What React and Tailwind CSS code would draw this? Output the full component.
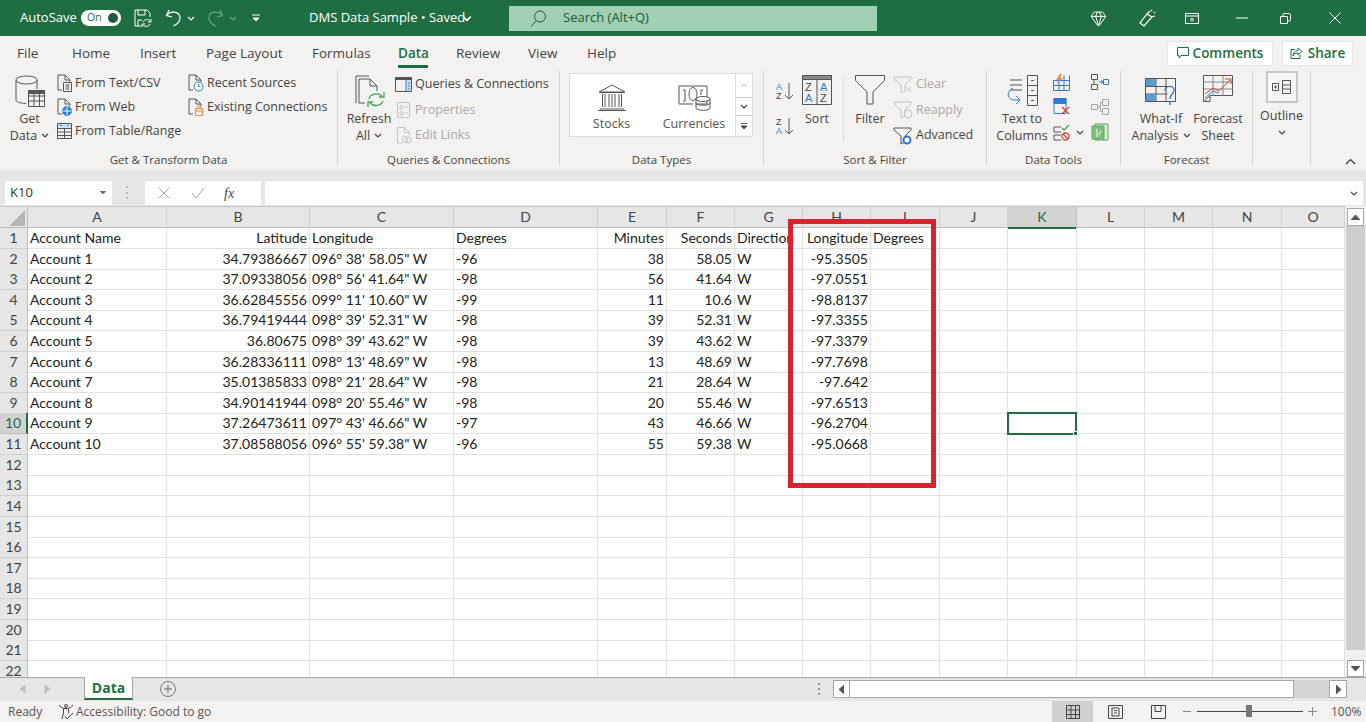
import { Gem } from "lucide-react";

const headers = ["A", "B", "C", "D", "E", "F", "G", "H", "I", "J", "K", "L", "M", "N", "O"];
const colw = "grid grid-cols-[28px_139px_143px_144px_144px_69px_68px_68px_68px_69px_68px_69px_68px_68px_69px_63px]";

const rows = [
  ["Account 1", "34.79386667", "096° 38' 58.05\" W", "-96", "38", "58.05", "W", "-95.3505"],
  ["Account 2", "37.09338056", "098° 56' 41.64\" W", "-98", "56", "41.64", "W", "-97.0551"],
  ["Account 3", "36.62845556", "099° 11' 10.60\" W", "-99", "11", "10.6", "W", "-98.8137"],
  ["Account 4", "36.79419444", "098° 39' 52.31\" W", "-98", "39", "52.31", "W", "-97.3355"],
  ["Account 5", "36.80675", "098° 39' 43.62\" W", "-98", "39", "43.62", "W", "-97.3379"],
  ["Account 6", "36.28336111", "098° 13' 48.69\" W", "-98", "13", "48.69", "W", "-97.7698"],
  ["Account 7", "35.01385833", "098° 21' 28.64\" W", "-98", "21", "28.64", "W", "-97.642"],
  ["Account 8", "34.90141944", "098° 20' 55.46\" W", "-98", "20", "55.46", "W", "-97.6513"],
  ["Account 9", "37.26473611", "097° 43' 46.66\" W", "-97", "43", "46.66", "W", "-96.2704"],
  ["Account 10", "37.08588056", "096° 55' 59.38\" W", "-96", "55", "59.38", "W", "-95.0668"],
];

// which columns are right aligned
const rightCols = [1, 4, 5, 7];

function Ic({ w, h, stroke = "#555", className = "", children }) {
  return (
    <svg width={w} height={h} viewBox={`0 0 ${w} ${h}`} fill="none" stroke={stroke} strokeWidth="1" className={"shrink-0 " + className}>
      {children}
    </svg>
  );
}

function Chev({ stroke = "#444", className = "" }) {
  return (
    <Ic w={8} h={5} stroke={stroke} className={className}>
      <path d="M1 1l3 3 3-3" strokeWidth="1.2" />
    </Ic>
  );
}

function Page({ stroke = "#555" }) {
  return <path d="M5 16H1V1h7l5 5v2M8 1v5h5" stroke={stroke} />;
}

function BigBtn({ className = "", icon, lines }) {
  return (
    <div className={"flex flex-col items-center pt-[4px] leading-[17px] " + className}>
      <div className="flex h-[35px] items-start justify-center">{icon}</div>
      {lines.map((l, i) => (
        <div key={i} className="flex items-center gap-[4px] whitespace-nowrap">{l}</div>
      ))}
    </div>
  );
}

function SmallRow({ icon, text, className = "", dim }) {
  return (
    <div className={"flex items-center gap-[3px] whitespace-nowrap " + (dim ? "text-[#a9a9a9] " : "") + className}>
      {icon}
      <span>{text}</span>
    </div>
  );
}

function Group({ label, className = "", children }) {
  return (
    <div className={"flex h-[94px] flex-col border-r border-[#d4d4d4] " + className}>
      <div className="flex min-h-0 flex-1">{children}</div>
      <div className="-mb-[2px] h-[14px] whitespace-nowrap text-center text-[11.5px] leading-[14px] text-[#444]">{label}</div>
    </div>
  );
}

function TitleBar() {
  return (
    <div className="flex h-[36px] items-center bg-[#1f6e43] pl-[20px] text-white">
      <span className="w-[61px] text-[13px]">AutoSave</span>
      <div className="flex h-[16px] w-[40px] items-center justify-between rounded-full bg-white pl-[6px] pr-[3px] text-[10.5px] text-[#1f6e43]">
        On
        <span className="h-[10px] w-[10px] rounded-full bg-[#1f5a3a]" />
      </div>
      <Ic w={18} h={19} stroke="#fff" className="ml-[13px]">
        <path d="M7 17H1V1h12l3 3v4M4 1v5h7V1M4 17v-6h4" />
        <path d="M9 13c1-3 6-3 7-1M17 10v3h-3M16 15c-1 3-5 3-7 1M8 18v-3h3" />
      </Ic>
      <Ic w={17} h={18} stroke="#fff" className="ml-[13px]">
        <path d="M4 1L1.5 6.5 7 8M1.5 6.5C5 1.5 14 2 15 8c.5 4-3 8-7 9" strokeWidth="1.2" />
      </Ic>
      <Chev stroke="#fff" className="ml-[5px]" />
      <Ic w={17} h={18} stroke="#6da488" className="ml-[12px]">
        <path d="M13 1l2.5 5.5L10 8m5.5-1.5C12 1.5 3 2 2 8c-.5 4 3 8 7 9" strokeWidth="1.2" />
      </Ic>
      <Chev stroke="#6da488" className="ml-[5px]" />
      <Ic w={10} h={8} stroke="#fff" className="ml-[14px]">
        <path d="M1 1h8M2 4h6L5 7z" fill="#fff" />
      </Ic>
      <span className="ml-[48px] w-[147px] whitespace-nowrap text-[13px]">DMS Data Sample • Saved</span>
      <Chev stroke="#fff" className="ml-[7px] scale-125" />
      <div className="ml-[38px] flex h-[25px] w-[368px] items-center bg-[#9fd0b4] pl-[21px] text-[13px] text-[#1c5a38]">
        <Ic w={16} h={17} stroke="#1c5a38">
          <circle cx="10" cy="6.5" r="5.5" />
          <path d="M6 11l-5 5.5" />
        </Ic>
        <span className="ml-[17px]">Search (Alt+Q)</span>
      </div>
      <Gem size={17} strokeWidth={1.4} color="#fff" className="ml-[213px]" />
      <Ic w={18} h={18} stroke="#fff" className="ml-[31px]">
        <path d="M6 17l-4-3 7-9 5 3zM9 5l3-3M14 8l3-1M13 2l1-1M16 4l1-1" strokeWidth="1.2" />
      </Ic>
      <Ic w={14} h={11} stroke="#fff" className="ml-[29px]">
        <path d="M.5.5h13v10H.5zM.5 3h13M7 9V5M5 7l2-2 2 2" />
      </Ic>
      <Ic w={12} h={2} stroke="#fff" className="ml-[37px]">
        <path d="M0 1h12" />
      </Ic>
      <Ic w={11} h={11} stroke="#fff" className="ml-[32px]">
        <path d="M.5 3.5h7v7h-7zM3 3.5V1.5c0-.5.5-1 1-1h5c1 0 1.500.5 1.500 1.500v5c0 .5-.5 1-1 1h-2" />
      </Ic>
      <Ic w={12} h={12} stroke="#fff" className="ml-[38px]">
        <path d="M.5.5l11 11M11.500.5l-11 11" />
      </Ic>
    </div>
  );
}

function TabRow() {
  return (
    <div className="flex h-[34px] items-center bg-[#f3f2f1] pl-[17px] text-[13.5px] text-[#444]">
      <div className="w-[55px]">File</div>
      <div className="w-[68px]">Home</div>
      <div className="w-[66px]">Insert</div>
      <div className="w-[106px] whitespace-nowrap">Page Layout</div>
      <div className="w-[86px]">Formulas</div>
      <div className="relative w-[58px] font-semibold text-[#1f6e43]">
        Data
        <span className="absolute bottom-[-5px] left-0 h-[3px] w-[30px] bg-[#1f6e43]" />
      </div>
      <div className="w-[72px]">Review</div>
      <div className="w-[59px]">View</div>
      <div>Help</div>
      <div className="ml-auto mr-[13px] flex gap-[9px] text-[13.5px] font-semibold text-[#1f6e43]">
        <div className="flex h-[25px] w-[106px] items-center justify-center gap-[4px] rounded-[2px] border border-[#e6e6e6] bg-white">
          <Ic w={12} h={12} stroke="#1f6e43">
            <path d="M.5.5h11v8H4L2 11V8.500H.5z" />
          </Ic>
          Comments
        </div>
        <div className="flex h-[25px] w-[71px] items-center justify-center gap-[5px] rounded-[2px] border border-[#e6e6e6] bg-white">
          <Ic w={13} h={12} stroke="#1f6e43">
            <path d="M5 2.500H1v9h9V8M8 1l4 3.500L8 8V6C5 6 4 7 3 9c0-3 2-5.500 5-5.500z" />
          </Ic>
          Share
        </div>
      </div>
    </div>
  );
}

function Ribbon() {
  return (
    <div className="flex h-[100px] items-start bg-[#f3f2f1] pt-px text-[12.5px] text-[#444] shadow-[0_2px_3px_rgba(0,0,0,0.18)]">
      <Group label="Get & Transform Data" className="w-[338px]">
        <BigBtn
          className="ml-[9px] w-[41px]"
          icon={
            <Ic w={30} h={33}>
              <ellipse cx="11.500" cy="5" rx="10.500" ry="4" />
              <path d="M1 5v20c0 1.500 3 3 10 3.500M22 5v9" />
              <path d="M13.500 15.500h16v16h-16zM13.500 21h16M13.500 26h16M19 18v13M24.500 18v13" />
              <path d="M13.500 15.500h16v3h-16z" fill="#555" />
            </Ic>
          }
          lines={["Get", <>Data <Chev /></>]}
        />
        <div className="ml-[7px] w-[131px]">
          <SmallRow
            className="h-[24px]"
            text="From Text/CSV"
            icon={
              <Ic w={15} h={18}>
                <Page />
                <path d="M6.500 8.500h8v9h-8zM8.500 11h4M8.500 13h4M8.500 15h4" />
              </Ic>
            }
          />
          <SmallRow
            className="h-[24px]"
            text="From Web"
            icon={
              <Ic w={15} h={18}>
                <Page />
                <circle cx="10" cy="13" r="4.500" fill="#2b7cd3" stroke="#2b7cd3" />
                <path d="M5.500 13h9M10 8.500v9" stroke="#fff" />
              </Ic>
            }
          />
          <SmallRow
            className="h-[24px]"
            text="From Table/Range"
            icon={
              <Ic w={15} h={16}>
                <path d="M.5.500h14v15H.5zM.5 5.500h14M.5 9h14M.5 12.500h14M7.500 5.500v10" />
                <path d="M1 1h13v4H1z" fill="#cfe2f3" stroke="none" />
                <path d="M3 2.500h2M10 2.500h2" stroke="#2b7cd3" />
              </Ic>
            }
          />
        </div>
        <div>
          <SmallRow
            className="h-[24px]"
            text="Recent Sources"
            icon={
              <Ic w={16} h={18}>
                <Page />
                <circle cx="10.500" cy="12.500" r="4.500" fill="#fff" stroke="#2b7cd3" />
                <path d="M10.500 10v2.500h2" stroke="#2b7cd3" />
              </Ic>
            }
          />
          <SmallRow
            className="h-[24px]"
            text="Existing Connections"
            icon={
              <Ic w={16} h={18}>
                <Page />
                <path d="M7.500 10.500h7v7h-7zM7.500 13h7M9.500 10.500V9c0-1.500 3-1.500 3 0v1.500" stroke="#e8883a" />
              </Ic>
            }
          />
        </div>
      </Group>

      <Group label="Queries & Connections" className="w-[222px]">
        <BigBtn
          className="ml-[6px] w-[50px]"
          icon={
            <Ic w={31} h={34} className="ml-[3px]">
              <path d="M1 28V1h13M4 28V4h11l7 7v5M15 4v7h7M4 28h6" />
              <path d="M14 24c1-5 9-7 13-3M29 17v5h-5M28 26c-2 5-9 6-13 2M13 32v-5h5" stroke="#3fa45b" strokeWidth="1.300" />
            </Ic>
          }
          lines={["Refresh", <>All <Chev /></>]}
        />
        <div className="ml-px pt-px">
          <SmallRow
            className="h-[25.500px]"
            text="Queries & Connections"
            icon={
              <Ic w={17} h={15}>
                <path d="M.5 .5h16v14H.5z" />
                <path d="M.5 .5h16v2H.5z" fill="#555" />
                <path d="M11 3h5v11h-5z" fill="#cfe2f3" stroke="none" />
                <path d="M11 3v11M13 6h2M13 9h2M13 12h2" stroke="#2b7cd3" />
              </Ic>
            }
          />
          <SmallRow
            dim
            className="h-[25.500px] pl-[2px]"
            text="Properties"
            icon={
              <Ic w={15} h={16} stroke="#c4c4c4">
                <path d="M.5.500h12v15H.5zM3 4h3v3H3zM3 10h3v3H3zM8 5h3M8 11h3" />
              </Ic>
            }
          />
          <SmallRow
            dim
            className="h-[25.500px] pl-[2px]"
            text="Edit Links"
            icon={
              <Ic w={15} h={17} stroke="#c4c4c4">
                <path d="M5 16H.5V.5h7l5 5v3M7.500.5v5h5" />
                <circle cx="8" cy="12.500" r="3" />
                <circle cx="11.500" cy="13" r="3" />
              </Ic>
            }
          />
        </div>
      </Group>

      <Group label="Data Types" className="w-[204px]">
        <div className="ml-[9px] mt-[2px] flex h-[64px] w-[184px] border border-[#dcdcdc] bg-white text-[#555]">
          <div className="flex w-[83px] flex-col items-center gap-[4px] pt-[10px]">
            <Ic w={30} h={27}>
              <path d="M15 1L2 8h26zM3 8.500h24M3 25h24M1 26.500h28" />
              <path d="M5.500 10v13M8 10v13M12 10v13M15 10v13M18 10v13M22 10v13M24.500 10v13" />
            </Ic>
            <span>Stocks</span>
          </div>
          <div className="flex w-[82px] flex-col items-center gap-[4px] pt-[10px]">
            <Ic w={33} h={27}>
              <path d="M1 2h28v18H18M1 2v18h14" />
              <path d="M5 6h2v11H5M25 6h-2v5" />
              <ellipse cx="15" cy="10" rx="4" ry="6.500" />
              <ellipse cx="25" cy="15" rx="7" ry="2.500" fill="#fff" />
              <path d="M18 15v9c0 3 14 3 14 0v-9M18 19c0 3 14 3 14 0" />
            </Ic>
            <span>Currencies</span>
          </div>
          <div className="flex w-[17px] flex-col border-l border-[#dcdcdc] bg-[#f3f2f1]">
            <div className="flex h-[23px] items-center justify-center bg-white">
              <Ic w={8} h={5} stroke="#c4c4c4">
                <path d="M1 4l3-3 3 3" />
              </Ic>
            </div>
            <div className="flex h-[19px] items-center justify-center border-y border-[#c8c8c8] bg-white">
              <Chev />
            </div>
            <div className="flex flex-1 items-center justify-center bg-white">
              <Ic w={8} h={7}>
                <path d="M1 .5h6M1 3l3 3 3-3z" fill="#444" />
              </Ic>
            </div>
          </div>
        </div>
      </Group>

      <Group label="Sort & Filter" className="w-[223px]">
        <div className="ml-[11px] flex w-[19px] flex-col gap-[16px] pt-[11px]">
          <Ic w={19} h={19}>
            <text x="1" y="8" fontSize="9" fill="#2b7cd3" stroke="none" fontFamily="Liberation Sans">A</text>
            <text x="1" y="17" fontSize="9" fill="#444" stroke="none" fontFamily="Liberation Sans">Z</text>
            <path d="M14 1v16M10 13l4 4 4-4" />
          </Ic>
          <Ic w={19} h={19}>
            <text x="1" y="8" fontSize="9" fill="#444" stroke="none" fontFamily="Liberation Sans">Z</text>
            <text x="1" y="17" fontSize="9" fill="#2b7cd3" stroke="none" fontFamily="Liberation Sans">A</text>
            <path d="M14 1v16M10 13l4 4 4-4" />
          </Ic>
        </div>
        <BigBtn
          className="ml-[3px] w-[40px]"
          icon={
            <Ic w={30} h={30}>
              <path d="M.5.5h29v29H.5zM15 .5v29" />
              <path d="M.5.5h29v4H.5z" fill="#888" />
              <text x="3" y="16" fontSize="11" fill="#444" stroke="none" fontFamily="Liberation Sans">Z</text>
              <text x="3" y="27" fontSize="11" fill="#2b7cd3" stroke="none" fontFamily="Liberation Sans">A</text>
              <text x="18" y="16" fontSize="11" fill="#2b7cd3" stroke="none" fontFamily="Liberation Sans">A</text>
              <text x="18" y="27" fontSize="11" fill="#444" stroke="none" fontFamily="Liberation Sans">Z</text>
            </Ic>
          }
          lines={["Sort"]}
        />
        <div className="ml-[6px] mt-[5px] h-[66px] w-px bg-[#dedede]" />
        <BigBtn
          className="ml-[6px] w-[40px]"
          icon={
            <Ic w={30} h={30}>
              <path d="M.5.5h29v5L18 17v12h-6V17L.5 5.500z" />
            </Ic>
          }
          lines={["Filter"]}
        />
        <div className="ml-[3px] pt-px">
          <SmallRow
            dim
            className="h-[25.500px]"
            text="Clear"
            icon={
              <Ic w={20} h={18} stroke="#c4c4c4">
                <path d="M1 1h17v2l-6 6v6l-4 2V9L1 3zM13 11l5 5M18 11l-5 5" />
              </Ic>
            }
          />
          <SmallRow
            dim
            className="h-[25.500px]"
            text="Reapply"
            icon={
              <Ic w={20} h={18} stroke="#c4c4c4">
                <path d="M1 1h17v2l-6 6v6l-4 2V9L1 3z" />
                <circle cx="15" cy="13" r="4" />
              </Ic>
            }
          />
          <SmallRow
            className="h-[25.500px]"
            text="Advanced"
            icon={
              <Ic w={20} h={18}>
                <path d="M1 1h17v2l-6 6v6l-4 2V9L1 3z" />
                <circle cx="14" cy="13" r="3.500" fill="#fff" stroke="#2b7cd3" strokeWidth="2" />
              </Ic>
            }
          />
        </div>
      </Group>

      <Group label="Data Tools" className="w-[134px]">
        <BigBtn
          className="ml-[7px] w-[56px]"
          icon={
            <Ic w={34} h={31}>
              <path d="M5 5h12M5 10h12M5 15h12" />
              <path d="M22.500.5h10v30h-10zM22.500 10.500h10M22.500 20.500h10M26 5.500h3M26 15.500h3M26 25.500h3" />
              <path d="M8 13c-6 3-7 10 0 12h7M11 21l4 4-4 4" stroke="#2b7cd3" />
            </Ic>
          }
          lines={["Text to", "Columns"]}
        />
        <div className="ml-[3px] flex w-[35px] flex-col gap-[5px] pt-[1px]">
          <div className="flex h-[20px] items-center">
            <Ic w={17} h={18}>
              <path d="M.5 7.500h16v10H.5zM.5 12.500h16M6 7.500v10M11 2.500v15M16.500 2.500v5" stroke="#2b7cd3" />
              <path d="M7 1L3 7h3L3 12l7-7H7l2-4z" fill="#e8883a" stroke="none" />
            </Ic>
          </div>
          <div className="flex h-[20px] items-center">
            <Ic w={17} h={18}>
              <path d="M1 .5h12v15H1z" stroke="#2b7cd3" />
              <path d="M1 .5h12v5H1z" fill="#2b7cd3" stroke="#2b7cd3" />
              <path d="M9 9l7 7M16 9l-7 7" stroke="#d1453b" strokeWidth="1.300" />
            </Ic>
          </div>
          <div className="flex h-[20px] items-center gap-[6px]">
            <Ic w={17} h={17}>
              <path d="M1 3h7M1 3v5h7M1 11h7M1 11v5h7" />
              <path d="M9 4l2 2 5-5" stroke="#3fa45b" strokeWidth="1.300" />
              <circle cx="12.500" cy="12.500" r="3.500" stroke="#d1453b" strokeWidth="1.300" />
              <path d="M10 10l5 5" stroke="#d1453b" strokeWidth="1.300" />
            </Ic>
            <Chev />
          </div>
        </div>
        <div className="ml-[3px] flex flex-col gap-[5px] pt-[1px]">
          <div className="flex h-[20px] items-center">
            <Ic w={18} h={16}>
              <path d="M.5.5h6v5h-6zM.5 10.500h6v5h-6zM3 5.500v5" />
              <path d="M8 8h4M10 6l2 2-2 2" stroke="#2b7cd3" />
              <path d="M12.500 5.500h5v5h-5z" stroke="#2b7cd3" />
            </Ic>
          </div>
          <div className="flex h-[20px] items-center">
            <Ic w={18} h={16} stroke="#a6a6a6">
              <path d="M.5 5.500h6v5h-6zM11.500.5h6v6h-6zM11.500 9.500h6v6h-6zM6.500 8h3M9.500 3.500v9h2M9.500 3.500h2" />
            </Ic>
          </div>
          <div className="flex h-[20px] items-center">
            <Ic w={18} h={18} stroke="#58a55c">
              <path d="M4 1h13v16H4z" fill="#d9ecd6" />
              <path d="M1 3h12v13H1z" fill="#7fbf7b" />
              <path d="M6 6v8M10 8l-2 4" stroke="#fff" />
            </Ic>
          </div>
        </div>
      </Group>

      <Group label="Forecast" className="w-[132px]">
        <BigBtn
          className="ml-[10px] w-[60px]"
          icon={
            <Ic w={33} h={31} className="mt-[3px]">
              <path d="M.5.5h30v23H.5zM.5 8.500h22M.5 16h22M11 .5v23M21 .5v23" />
              <path d="M1 1h10v7H1zM1 16h10v7H1z" fill="#5b9bd5" stroke="none" />
              <path d="M20 13c0-6 9-6 9-1 0 4-4 4-4 9M25 24v3" stroke="#2b7cd3" strokeWidth="1.400" />
            </Ic>
          }
          lines={["What-If", <>Analysis <Chev /></>]}
        />
        <BigBtn
          className="w-[54px]"
          icon={
            <Ic w={31} h={28}>
              <path d="M.5.5h29v20H7l-6 6h6v-6M.5.5v26" />
              <path d="M.5 7h29M.5 14h29M10 .5v20M20 .5v20" stroke="#888" />
              <path d="M2 19l8-6 6 3 11-11M22 4h6v5" stroke="#d1453b" />
              <path d="M2 23l8-7 6 2" stroke="#2b7cd3" />
            </Ic>
          }
          lines={["Forecast", "Sheet"]}
        />
      </Group>

      <div className="flex h-[94px] w-[58px] flex-col items-center border-r border-[#d4d4d4] leading-[17px]">
        <div className="flex h-[32px] w-[32px] items-center justify-center border-2 border-[#c8c8c8] bg-[#f7f7f7]">
          <Ic w={19} h={14}>
            <path d="M.5 3.500h6v7h-6zM10.500.5h8v13h-8zM10.500 5h8M10.500 9h8M3.500 5.500v3M2 7h3" />
          </Ic>
        </div>
        <div className="mt-[4px]">Outline</div>
        <Chev className="mt-[6px]" />
      </div>

      <div className="flex h-[97px] flex-1 items-end justify-end pr-[10px]">
        <Ic w={11} h={7} stroke="#333" className="mb-[3px]">
          <path d="M1 6l4.500-4.500L10 6" strokeWidth="1.200" />
        </Ic>
      </div>
    </div>
  );
}

function FormulaBar() {
  return (
    <div className="flex h-[36px] items-start bg-[#e6e6e6] pl-[5px] pt-[11px] text-[13px] text-[#333]">
      <div className="flex h-[24px] w-[107px] items-center justify-between bg-white pl-[5px] pr-[6px]">
        K10
        <Ic w={6} h={4} stroke="#777">
          <path d="M0 0h6L3 3z" fill="#777" />
        </Ic>
      </div>
      <div className="ml-[14px] mt-[5px] flex h-[13px] w-[2px] flex-col justify-between">
        <span className="h-[2px] bg-[#bbb]" />
        <span className="h-[2px] bg-[#bbb]" />
        <span className="h-[2px] bg-[#bbb]" />
      </div>
      <div className="ml-[17px] flex h-[24px] w-[116px] items-center bg-white pl-[13px]">
        <Ic w={12} h={12} stroke="#a6a6a6">
          <path d="M1 1l10 10M11 1L1 11" />
        </Ic>
        <Ic w={14} h={12} stroke="#a6a6a6" className="ml-[21px]">
          <path d="M1 6l4 5 8-10" />
        </Ic>
        <span className="ml-[19px] font-['Liberation_Serif',serif] text-[14px] italic text-[#444]">fx</span>
      </div>
      <div className="ml-[4px] flex h-[24px] w-[1098px] items-center justify-end bg-white pr-[5px]">
        <Chev />
      </div>
    </div>
  );
}

function ColumnHeader() {
  return (
    <div className={colw + " h-[22px] border-y border-[#bdbdbd] border-t-[#c8c8c8] bg-[#e6e6e6] text-center font-['Lato',sans-serif] text-[14px] leading-[20px] text-[#444]"}>
      <div className="flex items-end justify-end border-r border-[#bdbdbd] pb-[2px] pr-[2px]">
        <span className="h-0 w-0 border-b-[16px] border-l-[16px] border-b-[#b5b5b5] border-l-transparent" />
      </div>
      {headers.map((h) => (
        <div
          key={h}
          className={
            h === "K"
              ? "-mb-px border-b-2 border-r border-b-[#1f6e43] border-r-[#bdbdbd] bg-[#d2d2d2] text-[#1f6e43]"
              : "border-r border-[#d0d0d0]"
          }
        >
          {h}
        </div>
      ))}
      <div />
    </div>
  );
}

function Row({ num, cells }) {
  const active = num === 10;
  return (
    <div className={colw + " h-[20.620px] font-['Lato',sans-serif] text-[14px] leading-[20px] text-[#222]"}>
      <div
        className={
          active
            ? "border-b border-r-2 border-b-[#bdbdbd] border-r-[#1f6e43] bg-[#d2d2d2] text-center text-[#1f6e43]"
            : "border-b border-r border-b-[#d0d0d0] border-r-[#bdbdbd] bg-[#e6e6e6] text-center text-[#444]"
        }
      >
        {num}
      </div>
      {Array.from({ length: 16 }).map((_, i) => {
        const v = cells ? cells[i] : undefined;
        return (
          <div
            key={i}
            className={
              "whitespace-nowrap border-b border-r border-[#e0e0e0] px-[2px] " +
              (rightCols.includes(i) ? "text-right" : "text-left")
            }
          >
            {v}
          </div>
        );
      })}
    </div>
  );
}

function Sheet() {
  return (
    <div className="flex min-h-0 flex-1 bg-white">
      <div className="relative min-w-0 flex-1 overflow-hidden">
        <ColumnHeader />
        <Row num={1} cells={["Account Name", "Latitude", "Longitude", "Degrees", "Minutes", "Seconds", "Direction", "Longitude", "Degrees"]} />
        {Array.from({ length: 21 }).map((_, i) => (
          <Row key={i} num={i + 2} cells={rows[i]} />
        ))}
        {/* selected cell */}
        <div className="absolute left-[1007px] top-[206px] h-[23px] w-[70px] border-2 border-[#1f6e43]">
          <span className="absolute -bottom-[3px] -right-[3px] h-[5px] w-[5px] border border-white bg-[#1f6e43]" />
        </div>
      </div>
      <div className="flex w-[21px] flex-col bg-[#f1f1f1] px-[2px] pt-[2px]">
        <div className="flex h-[18px] items-center justify-center border border-[#a6a6a6] bg-white">
          <Ic w={9} h={5} stroke="#555">
            <path d="M0 5h9L4.500 0z" fill="#555" />
          </Ic>
        </div>
        <div className="-mx-[1px] h-[424px] bg-[#cdcdcd]" />
        <div className="flex-1" />
        <div className="flex h-[17px] items-center justify-center border border-[#a6a6a6] bg-white">
          <Ic w={9} h={5} stroke="#555">
            <path d="M0 0h9L4.500 5z" fill="#555" />
          </Ic>
        </div>
      </div>
    </div>
  );
}

function SheetBar() {
  return (
    <div className="flex h-[24px] items-start border-t border-[#a6a6a6] bg-[#e6e6e6] text-[#777]">
      <div className="flex h-[22px] w-[84px] items-center pl-[20px]">
        <Ic w={6} h={8} stroke="#c0c0c0">
          <path d="M5 0v8L0 4z" fill="#c0c0c0" />
        </Ic>
        <Ic w={6} h={8} stroke="#c0c0c0" className="ml-[18px]">
          <path d="M1 0v8l5-4z" fill="#c0c0c0" />
        </Ic>
      </div>
      <div className="-mt-px flex h-[23px] w-[49px] items-center justify-center border-x border-b-2 border-x-[#a6a6a6] border-b-[#1f6e43] bg-white text-[14px] font-bold text-[#1f6e43] font-['Open_Sans',sans-serif]">
        Data
      </div>
      <div className="ml-[27px] mt-[3px] flex h-[16px] w-[16px] items-center justify-center rounded-full border border-[#777]">
        <Ic w={8} h={8} stroke="#666">
          <path d="M4 0v8M0 4h8" />
        </Ic>
      </div>
      <div className="ml-[642px] mt-[5px] flex h-[12px] w-[2px] flex-col justify-between">
        <span className="h-[2px] bg-[#999]" />
        <span className="h-[2px] bg-[#999]" />
        <span className="h-[2px] bg-[#999]" />
      </div>
      <div className="ml-[13px] mt-[2px] flex h-[18px] w-[514px]">
        <div className="flex w-[17px] items-center justify-center border border-[#a6a6a6] bg-white">
          <Ic w={5} h={9} stroke="#555">
            <path d="M5 0v9L0 4.500z" fill="#555" />
          </Ic>
        </div>
        <div className="w-[444px] border-y border-r border-[#a6a6a6] bg-white" />
        <div className="w-[35px] bg-[#d4d4d4]" />
        <div className="flex w-[18px] items-center justify-center border border-[#a6a6a6] bg-white">
          <Ic w={5} h={9} stroke="#555">
            <path d="M0 0v9l5-4.500z" fill="#555" />
          </Ic>
        </div>
      </div>
    </div>
  );
}

function StatusBar() {
  return (
    <div className="flex h-[21px] items-center bg-[#f3f2f1] pl-[8px] text-[12px] text-[#555]">
      <span className="w-[50px]">Ready</span>
      <Ic w={16} h={17} stroke="#444">
        <circle cx="8" cy="3" r="1.500" />
        <path d="M1 2c2 3 4 3.500 7 3.500S13 5 15 2M5.500 6v4L4 16M10.500 6v4M7 13l2 3 6-6" />
      </Ic>
      <span className="ml-[2px]">Accessibility: Good to go</span>
      <div className="ml-auto flex h-full w-[41px] items-center justify-center bg-[#d0d0d0]">
        <Ic w={14} h={14} stroke="#444">
          <path d="M.5.500h13v13H.5zM.5 5h13M.5 9.500h13M5 .5v13M9.500.5v13" />
        </Ic>
      </div>
      <Ic w={15} h={14} stroke="#444" className="ml-[15px]">
        <path d="M.5.500h14v13H.5zM4 3h7v8H4zM6 5.500h3M6 8h3" />
      </Ic>
      <Ic w={15} h={14} stroke="#444" className="ml-[28px]">
        <path d="M.5.500h14v13H.5zM4 .5v6h6v-6" />
      </Ic>
      <span className="ml-[17px] h-px w-[8px] bg-[#888]" />
      <div className="relative ml-[6px] h-px w-[106px] bg-[#444]">
        <span className="absolute -top-[6px] left-[49px] h-[12px] w-[6px] bg-[#777]" />
      </div>
      <Ic w={9} h={9} stroke="#888" className="ml-[5px]">
        <path d="M4.500 0v9M0 4.500h9" />
      </Ic>
      <span className="ml-[14px] mr-[8px] w-[27px] text-right">100%</span>
    </div>
  );
}

export default function App() {
  return (
    <div className="relative flex h-screen w-[1366px] flex-col overflow-hidden bg-white font-['Open_Sans',sans-serif]">
      <TitleBar />
      <TabRow />
      <Ribbon />
      <FormulaBar />
      <Sheet />
      <SheetBar />
      <StatusBar />
      {/* red highlight drawn over the sheet */}
      <div className="absolute left-[788px] top-[219px] h-[269px] w-[148px] border-[5px] border-[#d9232e]" />
    </div>
  );
}
